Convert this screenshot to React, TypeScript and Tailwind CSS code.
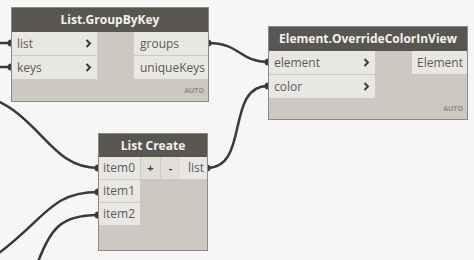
const FONT = { fontFamily: '"Open Sans", "Noto Sans", sans-serif' };

function Chevron() {
  return (
    <svg width="7" height="9" viewBox="0 0 7 9" className="shrink-0">
      <path d="M1.5 1 L5 4.5 L1.5 8" fill="none" stroke="#3b3b3b" strokeWidth="2" />
    </svg>
  );
}

function InPort({ label, w, h }: { label: string; w: number; h: number }) {
  return (
    <div
      className="flex items-center justify-between bg-[#e9e7e3] pl-[5px] pr-[5px] text-[12px] text-[#5a5a5a]"
      style={{ width: w, height: h }}
    >
      <span>{label}</span>
      <Chevron />
    </div>
  );
}

function OutPort({ label, w, h, left }: { label: string; w: number; h: number; left?: boolean }) {
  return (
    <div
      className={
        left
          ? "flex items-center justify-start bg-[#e9e7e3] pl-[6px] text-[12px] text-[#5a5a5a]"
          : "flex items-center justify-end bg-[#e9e7e3] pr-[4px] text-[12px] text-[#5a5a5a]"
      }
      style={{ width: w, height: h }}
    >
      {label}
    </div>
  );
}

function Header({ title, h }: { title: string; h: number }) {
  return (
    <div
      className="flex items-center justify-center bg-[#595652] text-[12px] font-bold text-[#f2f2f2]"
      style={{ height: h }}
    >
      {title}
    </div>
  );
}

function Auto() {
  return <div className="absolute bottom-[5px] right-[4px] text-[7px] font-bold text-[#8f8b85]">AUTO</div>;
}

export default function App() {
  return (
    <div className="relative h-[260px] w-[474px] overflow-hidden bg-[#f6f6f6]" style={FONT}>
      {/* wires */}
      <svg className="absolute inset-0" width="474" height="260">
        <g fill="none" stroke="#3a3a3a" strokeWidth="2.5">
          <path d="M -5 43 L 11 43" />
          <path d="M -5 67 L 11 67" />
          <path d="M -30 92 C 40 105, 45 168, 98 168" />
          <path d="M -5 256 C 45 220, 50 192, 98 192" />
          <path d="M 38 262 C 50 230, 60 215, 98 215" />
          <path d="M 208 43 C 240 43, 240 62, 268 62" />
          <path d="M 207 168 C 250 168, 225 86, 268 86" />
        </g>
        <g fill="#3a3a3a">
          <circle cx="11" cy="43" r="3.5" />
          <circle cx="11" cy="67" r="3.5" />
          <circle cx="98" cy="168" r="3.5" />
          <circle cx="98" cy="192" r="3.5" />
          <circle cx="98" cy="215" r="3.5" />
          <circle cx="268" cy="62" r="3.5" />
          <circle cx="268" cy="86" r="3.5" />
          <circle cx="208" cy="43" r="3.5" />
          <circle cx="207" cy="168" r="3.5" />
        </g>
      </svg>

      {/* List.GroupByKey */}
      <div className="absolute left-[11px] top-[7px] h-[95px] w-[198px] border border-[#8d8a85] bg-[#cdc9c2]">
        <Header title="List.GroupByKey" h={24} />
        <div className="flex justify-between">
          <div className="flex flex-col gap-[1px]">
            <InPort label="list" w={85} h={23} />
            <InPort label="keys" w={85} h={23} />
          </div>
          <div className="flex flex-col gap-[1px]">
            <OutPort label="groups" w={74} h={23} left />
            <OutPort label="uniqueKeys" w={74} h={23} left />
          </div>
        </div>
        <Auto />
      </div>

      {/* Element.OverrideColorInView */}
      <div className="absolute left-[268px] top-[26px] h-[94px] w-[200px] border border-[#8d8a85] bg-[#cdc9c2]">
        <Header title="Element.OverrideColorInView" h={24} />
        <div className="flex justify-between">
          <div className="flex flex-col gap-[1px]">
            <InPort label="element" w={106} h={23} />
            <InPort label="color" w={106} h={23} />
          </div>
          <OutPort label="Element" w={55} h={23} />
        </div>
        <Auto />
      </div>

      {/* List Create */}
      <div className="absolute left-[98px] top-[133px] h-[118px] w-[110px] border border-[#8d8a85] bg-[#cdc9c2]">
        <Header title="List Create" h={23} />
        <div className="flex">
          <div className="flex flex-col gap-[1px]">
            {["item0", "item1", "item2"].map((s) => (
              <div key={s} className="flex h-[22px] w-[41px] items-center bg-[#e9e7e3] pl-[4px] text-[12px] text-[#5a5a5a]">
                {s}
              </div>
            ))}
          </div>
          <div className="ml-[1px] flex h-[22px] w-[19px] items-center justify-center bg-[#e1ded9] text-[11px] font-bold text-[#3b3b3b]">+</div>
          <div className="ml-[1px] flex h-[22px] w-[19px] items-center justify-center bg-[#e1ded9] text-[11px] font-bold text-[#3b3b3b]">-</div>
          <div className="flex h-[22px] flex-1 items-center justify-end bg-[#e9e7e3] pr-[3px] text-[12px] text-[#5a5a5a]">list</div>
        </div>
      </div>
    </div>
  );
}
